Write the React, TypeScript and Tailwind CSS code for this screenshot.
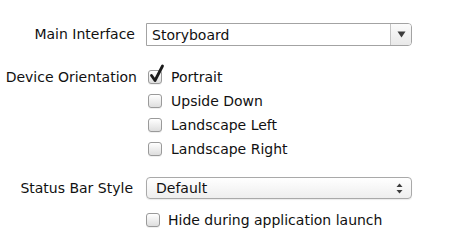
import React from "react";

function CheckBox({ checked }: { checked?: boolean }) {
  return (
    <span className="relative inline-block w-[14px] h-[14px] shrink-0">
      <span className="absolute inset-0 rounded-[3px] border border-[#9a9a9a] bg-gradient-to-b from-[#ffffff] to-[#dedede] shadow-[0_1px_0_rgba(0,0,0,0.06)]" />
      {checked && (
        <svg
          className="absolute left-[1px] top-[-6px]"
          width="16"
          height="19"
          viewBox="0 0 16 19"
        >
          <path
            d="M2.5 11.5 L6 16.5 L13.5 2"
            fill="none"
            stroke="#1a1a1a"
            strokeWidth="2.8"
            strokeLinecap="round"
            strokeLinejoin="round"
          />
        </svg>
      )}
    </span>
  );
}

function CheckRow({ label, checked }: { label: string; checked?: boolean }) {
  return (
    <div className="flex items-center h-6 pl-[2px]">
      <CheckBox checked={checked} />
      <span className="ml-[9px]">{label}</span>
    </div>
  );
}

export default function App() {
  const orientations = [
    { label: "Portrait", checked: true },
    { label: "Upside Down" },
    { label: "Landscape Left" },
    { label: "Landscape Right" },
  ];

  return (
    <div
      className="w-[474px] h-[251px] bg-white text-[#111] text-[14px] pt-[23px]"
      style={{ fontFamily: '"DejaVu Sans", "Liberation Sans", sans-serif' }}
    >
      {/* Main Interface */}
      <div className="flex items-center h-[23px]">
        <div className="w-[135px] text-right whitespace-nowrap">Main Interface</div>
        <div className="ml-[11px] flex w-[266px] h-[23px] border border-[#a3a3a3] rounded-r-[4px] bg-white">
          <div className="flex-1 flex items-center pl-[5px] pt-[1px]">
            Storyboard
          </div>
          <div className="w-[21px] flex items-center justify-center border-l border-[#c4c4c4] rounded-r-[3px] bg-gradient-to-b from-[#fbfbfb] to-[#e9e9e9]">
            <svg width="9" height="7" viewBox="0 0 9 7">
              <path d="M0.5 0.5 L8.5 0.5 L4.5 6.5 Z" fill="#3c3c3c" />
            </svg>
          </div>
        </div>
      </div>

      {/* Device Orientation */}
      <div className="flex mt-[19px]">
        <div className="w-[137px] -mr-[2px] text-right h-6 flex items-center justify-end whitespace-nowrap">
          Device Orientation
        </div>
        <div className="ml-[11px] flex flex-col">
          {orientations.map((o) => (
            <CheckRow key={o.label} label={o.label} checked={o.checked} />
          ))}
        </div>
      </div>

      {/* Status Bar Style */}
      <div className="flex items-center h-[22px] mt-[16px]">
        <div className="w-[133px] mr-[2px] text-right whitespace-nowrap">Status Bar Style</div>
        <div className="ml-[11px] flex items-center w-[266px] h-[22px] border border-[#a9a9a9] rounded-[4px] bg-gradient-to-b from-[#ffffff] to-[#eeeeee] shadow-[0_1px_1px_rgba(0,0,0,0.08)]">
          <div className="flex-1 pl-[9px] pt-[1px]">Default</div>
          <div className="w-[24px] flex items-center justify-center">
            <svg width="7" height="11" viewBox="0 0 7 11">
              <path d="M0.5 4 L6.5 4 L3.5 0.5 Z" fill="#3c3c3c" />
              <path d="M0.5 7 L6.5 7 L3.5 10.5 Z" fill="#3c3c3c" />
            </svg>
          </div>
        </div>
      </div>

      {/* Hide during launch */}
      <div className="flex mt-[9px]">
        <div className="w-[135px]" />
        <div className="ml-[11px] flex items-center h-6">
          <CheckBox />
          <span className="ml-[8px]">Hide during application launch</span>
        </div>
      </div>
    </div>
  );
}
